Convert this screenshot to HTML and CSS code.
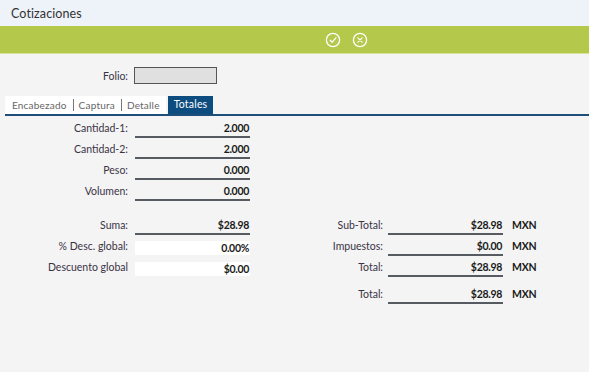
FILE: index.html
```html
<!DOCTYPE html>
<html lang="es">
<head>
    <meta charset="UTF-8">
    <meta name="viewport" content="width=device-width, initial-scale=1.0">
    <title>Cotizaciones</title>
    <link rel="stylesheet" href="styles.css">
</head>
<body>
    <div class="header">
        <h1>Cotizaciones</h1>
    </div>
    <div class="toolbar">
        <button class="tool-btn" title="Aceptar">
            <svg width="16" height="16" viewBox="0 0 16 16"><circle cx="8" cy="8" r="6.6" fill="none" stroke="#fff" stroke-width="1.3"/><path d="M5.2 8.2 L7.2 10.2 L10.9 5.8" fill="none" stroke="#fff" stroke-width="1.3" stroke-linecap="round" stroke-linejoin="round"/></svg>
        </button>
        <button class="tool-btn" title="Cancelar">
            <svg width="16" height="16" viewBox="0 0 16 16"><circle cx="8" cy="8" r="6.6" fill="none" stroke="#fff" stroke-width="1.3"/><path d="M5.9 5.9 L10.1 10.1 M10.1 5.9 L5.9 10.1" fill="none" stroke="#fff" stroke-width="1.3" stroke-linecap="round"/></svg>
        </button>
    </div>
    <div id="content">
        <div class="folio-row">
            <label for="folio">Folio:</label>
            <input type="text" id="folio" class="folio-input" disabled>
        </div>
        <div class="tabs">
            <span class="tab">Encabezado</span>
            <span class="tab">Captura</span>
            <span class="tab">Detalle</span>
            <span class="tab active">Totales</span>
        </div>
        <div class="totals">
            <div class="col-left">
                <div class="grid">
                    <span class="lbl">Cantidad-1:</span><span class="val">2.000</span>
                    <span class="lbl">Cantidad-2:</span><span class="val">2.000</span>
                    <span class="lbl">Peso:</span><span class="val">0.000</span>
                    <span class="lbl">Volumen:</span><span class="val">0.000</span>
                </div>
                <div class="grid group2">
                    <span class="lbl">Suma:</span><span class="val">$28.98</span>
                    <span class="lbl">% Desc. global:</span><span class="val box">0.00%</span>
                    <span class="lbl">Descuento global</span><span class="val box">$0.00</span>
                </div>
            </div>
            <div class="col-right">
                <div class="grid money">
                    <span class="lbl">Sub-Total:</span><span class="val">$28.98</span><span class="cur">MXN</span>
                    <span class="lbl">Impuestos:</span><span class="val">$0.00</span><span class="cur">MXN</span>
                    <span class="lbl">Total:</span><span class="val">$28.98</span><span class="cur">MXN</span>
                </div>
                <div class="grid money grand">
                    <span class="lbl">Total:</span><span class="val">$28.98</span><span class="cur">MXN</span>
                </div>
            </div>
        </div>
    </div>
</body>
</html>
```

FILE: styles.css
```css
body {
    margin: 0;
    background-color: #f4f4f4;
    font-family: Lato, "Open Sans", sans-serif;
    color: #333;
}
.header {
    height: 26px;
    background-color: #eef2f9;
    display: flex;
    align-items: center;
    padding-left: 11px;
}
.header h1 {
    margin: 0;
    font-size: 12.5px;
    font-weight: normal;
    color: #333;
    letter-spacing: 0.1px;
}
.toolbar {
    height: 27px;
    background-color: #b4c84b;
    border-bottom: 1px solid #d5e39a;
    display: flex;
    align-items: center;
    padding-left: 325px;
    gap: 11px;
}
.tool-btn {
    background: none;
    border: none;
    padding: 0;
    width: 16px;
    height: 16px;
    cursor: pointer;
}
.tool-btn svg {
    display: block;
}
.folio-row {
    display: flex;
    align-items: center;
    margin-top: 13px;
    height: 17px;
}
.folio-row label {
    width: 128px;
    text-align: right;
    font-size: 10.5px;
    color: #3a3346;
}
.folio-input {
    margin: 0 0 0 6px;
    width: 83px;
    height: 17px;
    box-sizing: border-box;
    border: 1px solid #555;
    background-color: #e0e0e0;
    padding: 0;
}
.tabs {
    display: flex;
    align-items: stretch;
    margin: 12px 0 0 5px;
    height: 18px;
    border-bottom: 2px solid #1d4f7a;
}
.tab {
    background-color: #fff;
    font-size: 10px;
    color: #666;
    padding: 0 6px;
    display: flex;
    align-items: center;
    position: relative;
    letter-spacing: 0.2px;
}
.tab:first-child {
    padding-left: 7px;
}
.tab + .tab:not(.active)::before {
    content: "";
    position: absolute;
    left: 0;
    top: 3px;
    bottom: 3px;
    border-left: 1px solid #777;
}
.tab.active {
    background-color: #0d4c7e;
    color: #fff;
    padding: 0 6px 2px;
    margin-left: 2px;
    font-size: 10.5px;
}
.totals {
    display: flex;
}
.grid {
    display: grid;
    grid-auto-rows: 21px;
    font-size: 10.5px;
}
.col-left {
    width: 250px;
    padding-top: 1px;
}
.col-left .grid {
    grid-template-columns: 128px 115px;
    column-gap: 7px;
}
.group2 {
    margin-top: 13px;
}
.col-right {
    padding-top: 98px;
}
.money {
    grid-template-columns: 133px 115px auto;
    column-gap: 5px;
}
.money.grand {
    margin-top: 6px;
}
.lbl {
    text-align: right;
    align-self: end;
    padding-bottom: 4px;
    color: #3a3346;
    white-space: nowrap;
}
.val {
    text-align: right;
    font-weight: bold;
    color: #1a1a1a;
    border-bottom: 2px solid #555b60;
    display: flex;
    align-items: flex-end;
    justify-content: flex-end;
    padding: 0 1px 2px 0;
    letter-spacing: -0.3px;
}
.val.box {
    border-bottom: none;
    background-color: #fff;
    height: 14px;
    align-self: end;
    margin-bottom: 1px;
    padding-bottom: 0;
    align-items: center;
}
.cur {
    align-self: end;
    padding: 0 0 4px 4px;
    font-weight: bold;
    color: #1a1a1a;
    letter-spacing: -0.2px;
}
```
